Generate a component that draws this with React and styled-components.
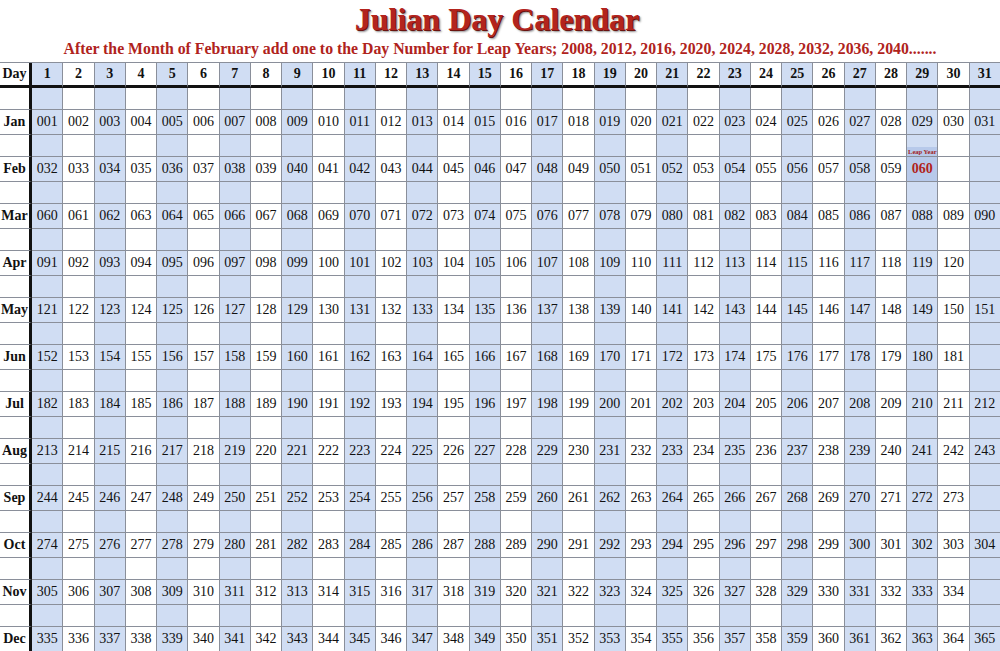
import React from "react";
import styled, { createGlobalStyle } from "styled-components";

const GlobalStyle = createGlobalStyle`
  html, body {
    margin: 0;
    padding: 0;
    background: #fff;
    overflow: hidden;
  }
  body {
    font-family: "Liberation Serif", "Times New Roman", serif;
  }
`;

const MONTHS = [
  ["Jan", 31],
  ["Feb", 28],
  ["Mar", 31],
  ["Apr", 30],
  ["May", 31],
  ["Jun", 30],
  ["Jul", 31],
  ["Aug", 31],
  ["Sep", 30],
  ["Oct", 31],
  ["Nov", 30],
  ["Dec", 31],
];

const DAYS = Array.from({ length: 31 }, (_, i) => i + 1);
const LINE = "#8a8f9a";

const pad = (n) => String(n).padStart(3, "0");

const App = () => {
  let offset = 0;
  const rows = MONTHS.map(([name, len]) => {
    const start = offset;
    offset += len;
    return { name, len, start };
  });

  return (
    <Page>
      <GlobalStyle />
      <Heading>
        <Title>Julian Day Calendar</Title>
        <Subtitle>
          After the Month of February add one to the Day Number for Leap Years;
          2008, 2012, 2016, 2020, 2024, 2028, 2032, 2036, 2040.......
        </Subtitle>
      </Heading>
      <Grid>
        <Cell $h={25} $head $label>
          Day
        </Cell>
        {DAYS.map((d) => (
          <Cell key={d} $h={25} $head $blue={d % 2 === 1}>
            {d}
          </Cell>
        ))}
        {rows.map((r) => (
          <React.Fragment key={r.name}>
            <Cell $h={22} $label />
            {DAYS.map((d) => (
              <Cell key={d} $h={22} $blue={d % 2 === 1} $bottom>
                {r.name === "Feb" && d === 29 && <LeapTag>Leap Year</LeapTag>}
              </Cell>
            ))}
            <Cell $h={25} $label>
              {r.name}
            </Cell>
            {DAYS.map((d) => {
              const leap = r.name === "Feb" && d === 29;
              return (
                <Cell key={d} $h={25} $blue={d % 2 === 1} $leap={leap}>
                  {leap ? "060" : d <= r.len ? pad(r.start + d) : ""}
                </Cell>
              );
            })}
          </React.Fragment>
        ))}
      </Grid>
    </Page>
  );
};

export default App;

const Page = styled.div`
  width: 1000px;
  height: 651px;
  overflow: hidden;
`;

const Heading = styled.header`
  display: flex;
  flex-direction: column;
  align-items: center;
  padding-top: 3px;
`;

const Title = styled.h1`
  margin: 0 0 0 -6px;
  font-size: 32px;
  line-height: 32px;
  font-weight: 700;
  color: #b3241d;
  text-shadow: 1px 1px 0 #6b1410, 2px 2px 2px rgba(0, 0, 0, 0.45);
`;

const Subtitle = styled.p`
  margin: 4px 0 0;
  font-size: 15.8px;
  line-height: 20px;
  font-weight: 700;
  color: #b0231c;
  white-space: nowrap;
`;

const Grid = styled.div`
  margin-top: 3px;
  width: 1001px;
  display: grid;
  grid-template-columns: 32px repeat(31, 1fr);
  border-top: 1px solid ${LINE};
`;

const Cell = styled.div`
  box-sizing: border-box;
  height: ${(p) => p.$h}px;
  display: flex;
  align-items: ${(p) => (p.$bottom ? "flex-end" : "center")};
  justify-content: center;
  background: ${(p) => (p.$leap ? "#b7c9ea" : p.$blue ? "#d0ddf3" : "#fff")};
  border-right: ${(p) => (p.$label ? "3px solid #111" : `1px solid ${LINE}`)};
  border-bottom: ${(p) => (p.$head ? "3px solid #111" : `1px solid ${LINE}`)};
  font-size: 14px;
  font-weight: ${(p) => (p.$head || p.$label || p.$leap ? 700 : 400)};
  color: ${(p) => (p.$leap ? "#b0231c" : "#111")};
  white-space: nowrap;
`;

const LeapTag = styled.span`
  display: block;
  width: 100%;
  height: 9px;
  background: #b7c9ea;
  color: #a3211b;
  font-size: 6.5px;
  line-height: 9px;
  font-weight: 700;
  text-align: center;
`;
